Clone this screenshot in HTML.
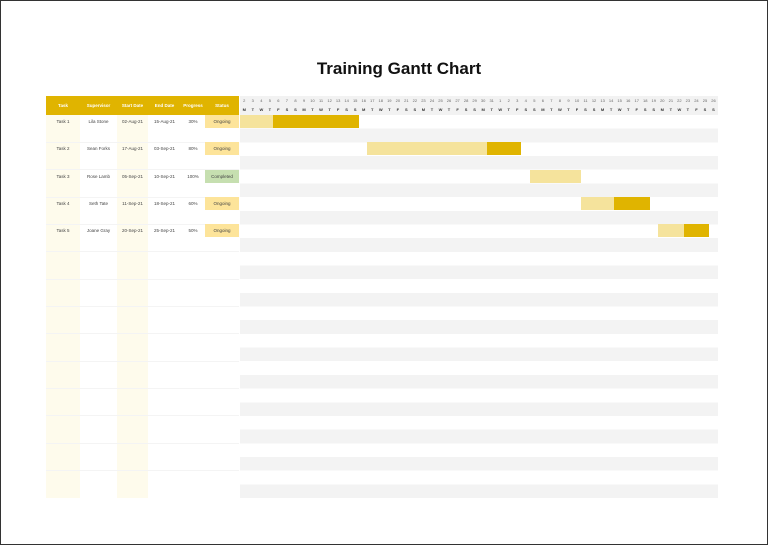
<!DOCTYPE html>
<html><head><meta charset="utf-8"><style>
*{margin:0;padding:0;box-sizing:border-box}
body{width:768px;height:545px;background:#fff;font-family:"Liberation Sans",sans-serif;position:relative;overflow:hidden}
.frame{position:absolute;left:0;top:0;width:768px;height:545px;border:1px solid #333}
h1{position:absolute;left:0;width:798px;top:59px;text-align:center;font-size:17px;font-weight:bold;color:#111}
.hdr{position:absolute;top:96px;height:19px;background:#e0b400;color:#fff;font-size:4.5px;font-weight:bold;display:flex;align-items:center;justify-content:center}
.col{position:absolute;top:115px;height:383px}
.cell{position:absolute;font-size:4.5px;color:#444;text-align:center;line-height:13px}
.gh{position:absolute;left:240px;top:96px;width:478px;height:19px;background:#f2f2f2}
.gh div{display:flex;height:9px;align-items:center}
.gh span{width:8.536px;text-align:center;font-size:4px;color:#666}
.gh .l span{font-weight:bold;color:#333}
.stripes{position:absolute;left:240px;top:115px;width:478px;height:383px;background:repeating-linear-gradient(#fff 0,#fff 13.68px,#f3f3f3 13.68px,#f3f3f3 27.36px)}
.bar{position:absolute;height:13px}
.lt{background:#f5e39c}.dk{background:#e0b400}
.hl{position:absolute;left:46px;width:193px;height:1px;background:#f4f4f4}
</style></head><body>
<div class="frame"></div>
<h1>Training Gantt Chart</h1>
<div class="hdr" style="left:46px;width:34px">Task</div>
<div class="hdr" style="left:80px;width:37px">Supervisor</div>
<div class="hdr" style="left:117px;width:31px">Start Date</div>
<div class="hdr" style="left:148px;width:33px">End Date</div>
<div class="hdr" style="left:181px;width:24px">Progress</div>
<div class="hdr" style="left:205px;width:34px">Status</div>
<div class="col" style="left:46px;width:34px;background:#fefbec"></div>
<div class="col" style="left:117px;width:31px;background:#fefbec"></div>
<div class="hl" style="top:142px"></div><div class="hl" style="top:169px"></div><div class="hl" style="top:197px"></div><div class="hl" style="top:224px"></div><div class="hl" style="top:251px"></div><div class="hl" style="top:279px"></div><div class="hl" style="top:306px"></div><div class="hl" style="top:333px"></div><div class="hl" style="top:361px"></div><div class="hl" style="top:388px"></div><div class="hl" style="top:415px"></div><div class="hl" style="top:443px"></div><div class="hl" style="top:470px"></div>
<div class="gh"><div><span>2</span><span>3</span><span>4</span><span>5</span><span>6</span><span>7</span><span>8</span><span>9</span><span>10</span><span>11</span><span>12</span><span>13</span><span>14</span><span>15</span><span>16</span><span>17</span><span>18</span><span>19</span><span>20</span><span>21</span><span>22</span><span>23</span><span>24</span><span>25</span><span>26</span><span>27</span><span>28</span><span>29</span><span>30</span><span>31</span><span>1</span><span>2</span><span>3</span><span>4</span><span>5</span><span>6</span><span>7</span><span>8</span><span>9</span><span>10</span><span>11</span><span>12</span><span>13</span><span>14</span><span>15</span><span>16</span><span>17</span><span>18</span><span>19</span><span>20</span><span>21</span><span>22</span><span>23</span><span>24</span><span>25</span><span>26</span></div>
<div class="l"><span>M</span><span>T</span><span>W</span><span>T</span><span>F</span><span>S</span><span>S</span><span>M</span><span>T</span><span>W</span><span>T</span><span>F</span><span>S</span><span>S</span><span>M</span><span>T</span><span>W</span><span>T</span><span>F</span><span>S</span><span>S</span><span>M</span><span>T</span><span>W</span><span>T</span><span>F</span><span>S</span><span>S</span><span>M</span><span>T</span><span>W</span><span>T</span><span>F</span><span>S</span><span>S</span><span>M</span><span>T</span><span>W</span><span>T</span><span>F</span><span>S</span><span>S</span><span>M</span><span>T</span><span>W</span><span>T</span><span>F</span><span>S</span><span>S</span><span>M</span><span>T</span><span>W</span><span>T</span><span>F</span><span>S</span><span>S</span></div></div>
<div class="stripes"></div>
<div class="bar lt" style="left:240px;top:115px;width:34px"></div><div class="bar dk" style="left:273px;top:115px;width:86px"></div>
<div class="bar lt" style="left:367px;top:142px;width:121px"></div><div class="bar dk" style="left:487px;top:142px;width:34px"></div>
<div class="bar lt" style="left:530px;top:170px;width:51px"></div>
<div class="bar lt" style="left:581px;top:197px;width:34px"></div><div class="bar dk" style="left:614px;top:197px;width:36px"></div>
<div class="bar lt" style="left:658px;top:224px;width:26px"></div><div class="bar dk" style="left:684px;top:224px;width:25px"></div>

<div class="cell" style="left:46px;width:34px;top:115px">Task 1</div><div class="cell" style="left:80px;width:37px;top:115px">Lila Stone</div><div class="cell" style="left:117px;width:31px;top:115px">02-Aug-21</div><div class="cell" style="left:148px;width:33px;top:115px">15-Aug-21</div><div class="cell" style="left:181px;width:24px;top:115px">30%</div><div class="cell" style="left:205px;width:34px;top:115px;background:#fde49a">Ongoing</div>
<div class="cell" style="left:46px;width:34px;top:142px">Task 2</div><div class="cell" style="left:80px;width:37px;top:142px">Sean Forks</div><div class="cell" style="left:117px;width:31px;top:142px">17-Aug-21</div><div class="cell" style="left:148px;width:33px;top:142px">03-Sep-21</div><div class="cell" style="left:181px;width:24px;top:142px">80%</div><div class="cell" style="left:205px;width:34px;top:142px;background:#fde49a">Ongoing</div>
<div class="cell" style="left:46px;width:34px;top:170px">Task 3</div><div class="cell" style="left:80px;width:37px;top:170px">Rose Lamb</div><div class="cell" style="left:117px;width:31px;top:170px">05-Sep-21</div><div class="cell" style="left:148px;width:33px;top:170px">10-Sep-21</div><div class="cell" style="left:181px;width:24px;top:170px">100%</div><div class="cell" style="left:205px;width:34px;top:170px;background:#c6dfb0">Completed</div>
<div class="cell" style="left:46px;width:34px;top:197px">Task 4</div><div class="cell" style="left:80px;width:37px;top:197px">Seth Tate</div><div class="cell" style="left:117px;width:31px;top:197px">11-Sep-21</div><div class="cell" style="left:148px;width:33px;top:197px">18-Sep-21</div><div class="cell" style="left:181px;width:24px;top:197px">60%</div><div class="cell" style="left:205px;width:34px;top:197px;background:#fde49a">Ongoing</div>
<div class="cell" style="left:46px;width:34px;top:224px">Task 5</div><div class="cell" style="left:80px;width:37px;top:224px">Joane Gray</div><div class="cell" style="left:117px;width:31px;top:224px">20-Sep-21</div><div class="cell" style="left:148px;width:33px;top:224px">25-Sep-21</div><div class="cell" style="left:181px;width:24px;top:224px">50%</div><div class="cell" style="left:205px;width:34px;top:224px;background:#fde49a">Ongoing</div>
</body></html>
